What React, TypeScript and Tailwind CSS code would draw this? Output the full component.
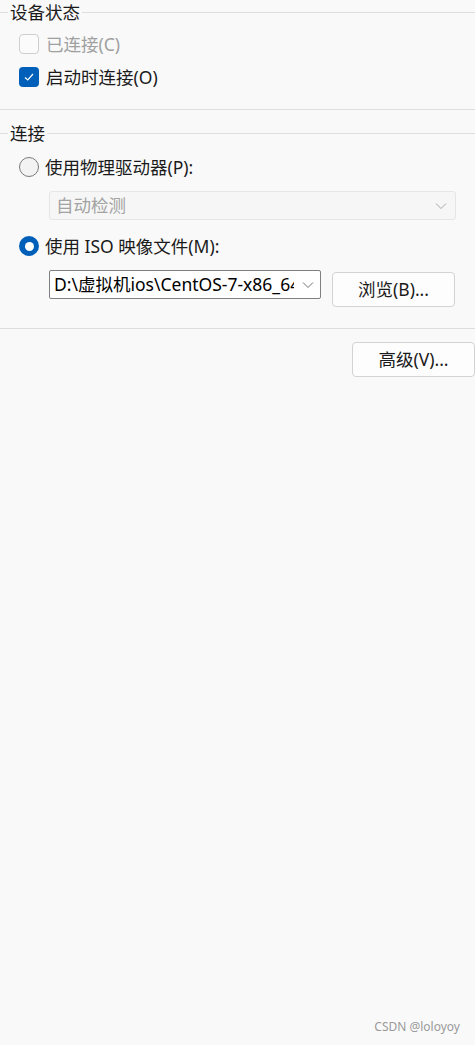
import React from 'react';

const font = {
  fontFamily: '"Noto Sans", "Noto Sans CJK SC", sans-serif',
};

function Chevron({ className }: { className: string }) {
  return (
    <svg viewBox="0 0 12 8" className={className} fill="none" stroke="currentColor" strokeWidth="1">
      <path d="M1 1.5 6 6.5 11 1.5" />
    </svg>
  );
}

function GroupHeader({ title }: { title: string }) {
  return (
    <div className="flex h-[22px] items-center">
      <div className="h-px w-[8px] bg-[#dedede]" />
      <span className="ml-[2px] text-[17.5px] leading-[22px] text-[#1b1b1b]">{title}</span>
      <div className="ml-[2px] h-px flex-1 bg-[#dedede]" />
    </div>
  );
}

function Checkbox({ label, checked, disabled }: { label: string; checked?: boolean; disabled?: boolean }) {
  return (
    <div className="flex h-[20px] items-center pl-[19px]">
      {checked ? (
        <div className="flex h-[20px] w-[20px] items-center justify-center rounded-[4px] bg-[#005fb8]">
          <svg viewBox="0 0 12 12" className="h-[12px] w-[12px]" fill="none" stroke="white" strokeWidth="1.2">
            <path d="M2 6.5 4.8 9 10 3" />
          </svg>
        </div>
      ) : (
        <div className="h-[20px] w-[20px] rounded-[4px] border border-[#cfcfcf] bg-[#fbfbfb]" />
      )}
      <span className={`ml-[7px] text-[17.5px] leading-[20px] ${disabled ? 'text-[#a0a0a0]' : 'text-[#1b1b1b]'}`}>
        {label}
      </span>
    </div>
  );
}

function Radio({ label, checked }: { label: string; checked?: boolean }) {
  return (
    <div className="flex h-[20px] items-center pl-[19px]">
      {checked ? (
        <div className="flex h-[20px] w-[20px] items-center justify-center rounded-full bg-[#005fb8]">
          <div className="h-[9px] w-[9px] rounded-full bg-white" />
        </div>
      ) : (
        <div className="h-[20px] w-[20px] rounded-full border border-[#7a7a7a] bg-[#f3f3f3]" />
      )}
      <span className="ml-[6px] text-[17.5px] leading-[20px] text-[#1b1b1b]">{label}</span>
    </div>
  );
}

function Button({ label }: { label: string }) {
  return (
    <div className="flex h-[35px] w-[123px] items-center justify-center rounded-[4px] border border-[#d3d3d3] bg-[#fdfdfd] text-[17.5px] text-[#1b1b1b]">
      {label}
    </div>
  );
}

export default function App() {
  return (
    <div className="relative h-[1045px] w-[475px] overflow-hidden bg-[#f9f9f9]" style={font}>
      <div className="flex flex-col">
        <div className="h-[1px]" />
        <GroupHeader title="设备状态" />
        <div className="mt-[11px]">
          <Checkbox label="已连接(C)" disabled />
        </div>
        <div className="mt-[13px]">
          <Checkbox label="启动时连接(O)" checked />
        </div>
        <div className="mt-[22px] h-px bg-[#dedede]" />

        <div className="mt-[12px]">
          <GroupHeader title="连接" />
        </div>
        <div className="mt-[13px]">
          <Radio label="使用物理驱动器(P):" />
        </div>
        <div className="ml-[49px] mr-[19px] mt-[14px] flex h-[29px] items-center rounded-[3px] border border-[#e6e6e6] bg-[#f6f6f6] pl-[6px] pr-[8px]">
          <span className="flex-1 text-[17.5px] text-[#a3a3a3]">自动检测</span>
          <Chevron className="h-[8px] w-[12px] text-[#a8a8a8]" />
        </div>
        <div className="mt-[16px]">
          <Radio label="使用 ISO 映像文件(M):" checked />
        </div>
        <div className="ml-[49px] mt-[14px] flex items-start">
          <div className="flex h-[29px] w-[272px] items-center rounded-[2px] border border-[#7f7f7f] bg-white pl-[4px] pr-[6px]">
            <span className="min-w-0 flex-1 overflow-hidden whitespace-nowrap text-[17.5px] text-black">
              D:\虚拟机ios\CentOS-7-x86_64-DVD-2009.iso
            </span>
            <Chevron className="ml-[8px] h-[8px] w-[12px] shrink-0 text-[#707070]" />
          </div>
          <div className="ml-[11px] mt-[2px]">
            <Button label="浏览(B)..." />
          </div>
        </div>
        <div className="mt-[21px] h-px bg-[#dedede]" />
        <div className="mt-[13px] flex justify-end">
          <Button label="高级(V)..." />
        </div>
      </div>
      <div className="absolute bottom-[9px] right-[15px] text-[12px] text-[#9a9a9a]">CSDN @loloyoy</div>
    </div>
  );
}
